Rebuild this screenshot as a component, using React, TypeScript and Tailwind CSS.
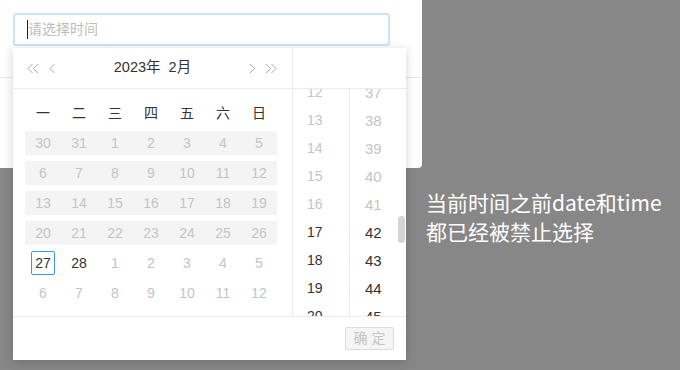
const font = { fontFamily: '"Liberation Sans", "Noto Sans CJK SC", sans-serif' };

const weekdays = ["一", "二", "三", "四", "五", "六", "日"];

// 6 weeks shown, first 4 fully before today (disabled)
const weeks: { d: number; cur: boolean }[][] = [
  [30, 31, 1, 2, 3, 4, 5],
  [6, 7, 8, 9, 10, 11, 12],
  [13, 14, 15, 16, 17, 18, 19],
  [20, 21, 22, 23, 24, 25, 26],
  [27, 28, 1, 2, 3, 4, 5],
  [6, 7, 8, 9, 10, 11, 12],
].map((row, r) => row.map((d, i) => ({ d, cur: r === 4 && i < 2 })));

const hours = [12, 13, 14, 15, 16, 17, 18, 19, 20];
const minutes = [37, 38, 39, 40, 41, 42, 43, 44, 45];

function Chevron({ dir, double }: { dir: "left" | "right"; double?: boolean }) {
  const single = dir === "left" ? "M5.5 1 L1 5.5 L5.5 10" : "M1 1 L5.5 5.5 L1 10";
  return (
    <svg width={double ? 12 : 7} height="11" viewBox={double ? "0 0 12 11" : "0 0 7 11"} fill="none">
      <path d={single} stroke="#aaa" strokeWidth="1" />
      {double && (
        <path
          d={dir === "left" ? "M11 1 L6.5 5.5 L11 10" : "M6.5 1 L11 5.5 L6.5 10"}
          stroke="#aaa"
          strokeWidth="1"
        />
      )}
    </svg>
  );
}

function DatePanel() {
  return (
    <div className="w-[280px] border-r border-[#ebebeb]">
      <div className="flex h-[41px] items-center border-b border-[#ebebeb] pl-[14px] pr-[15px]">
        <div className="flex items-center gap-[10px]">
          <Chevron dir="left" double />
          <Chevron dir="left" />
        </div>
        <div className="flex-1 text-center text-[14.5px] text-[#333]">2023年&nbsp; 2月</div>
        <div className="flex items-center gap-[9px]">
          <Chevron dir="right" />
          <Chevron dir="right" double />
        </div>
      </div>
      <div className="pl-[12px] pr-[15px] pt-[9px]">
        <div className="grid h-[30px] grid-cols-7 items-center text-center text-[14px] text-[#333]">
          {weekdays.map((w) => (
            <div key={w}>{w}</div>
          ))}
        </div>
        {weeks.map((row, r) => (
          <div key={r} className="py-[3px]">
            <div
              className={`grid h-[24px] grid-cols-7 items-center text-center text-[14px] ${
                r < 4 ? "bg-[#f4f4f4]" : ""
              }`}
            >
              {row.map((c, i) => (
                <div key={i} className="flex justify-center">
                  <div
                    className={`flex h-[24px] w-[24px] items-center justify-center ${
                      c.cur ? "text-[#333]" : "text-[#c4c4c4]"
                    } ${r === 4 && i === 0 ? "rounded-[2px] border border-[#3c97f0]" : ""}`}
                  >
                    {c.d}
                  </div>
                </div>
              ))}
            </div>
          </div>
        ))}
      </div>
    </div>
  );
}

function TimePanel() {
  return (
    <div className="flex w-[113px] flex-col">
      <div className="h-[41px] border-b border-[#ebebeb]" />
      <div className="flex h-[227px]">
        <div className="w-[57px] overflow-hidden border-r border-[#ebebeb]">
          <div className="-mt-[11px]">
            {hours.map((h) => (
              <div
                key={h}
                className={`flex h-[28px] items-center pl-[14px] text-[14px] ${
                  h < 17 ? "text-[#c4c4c4]" : "text-[#333]"
                }`}
              >
                {h}
              </div>
            ))}
          </div>
        </div>
        <div className="relative w-[56px] overflow-hidden">
          <div className="-mt-[10px]">
            {minutes.map((m) => (
              <div
                key={m}
                className={`flex h-[28px] items-center pl-[15px] text-[15px] ${
                  m < 42 ? "text-[#c4c4c4]" : "text-[#333]"
                }`}
              >
                {m}
              </div>
            ))}
          </div>
          <div className="absolute right-[1px] top-[127px] h-[27px] w-[7px] rounded-[4px] bg-[#d4d4d4]" />
        </div>
      </div>
    </div>
  );
}

function Picker() {
  return (
    <div className="absolute left-[13px] top-[48px] w-[393px] bg-white shadow-[0_2px_10px_rgba(0,0,0,0.18)]">
      <div className="flex">
        <DatePanel />
        <TimePanel />
      </div>
      <div className="flex h-[44px] items-center justify-end border-t border-[#ebebeb] pr-[12px]">
        <button className="flex h-[23px] w-[49px] items-center justify-center rounded-[2px] border border-[#dcdcdc] bg-[#f5f5f5] text-[14px] text-[#c4c4c4]">
          确 定
        </button>
      </div>
    </div>
  );
}

export default function App() {
  return (
    <div className="relative flex h-[370px] w-[680px] overflow-hidden bg-[#878787]" style={font}>
      <div className="h-[168px] w-[422px] rounded-br-[4px] bg-white">
        <div className="h-[78px] border-b border-[#e8e8e8] p-[13px] pb-0">
          <div className="flex h-[33px] w-[377px] items-center rounded-[3px] border-2 border-[#cfe3f7] pl-[12px]">
            <span className="h-[19px] w-[1px] bg-[#222]" />
            <span className="text-[14px] text-[#bdbdbd]">请选择时间</span>
          </div>
        </div>
      </div>
      <div className="ml-[4px] mt-[188px] font-['Noto_Sans_CJK_SC',sans-serif] text-[21px] font-normal leading-[29px] text-white">
        <div>当前时间之前date和time</div>
        <div>都已经被禁止选择</div>
      </div>
      <Picker />
    </div>
  );
}
